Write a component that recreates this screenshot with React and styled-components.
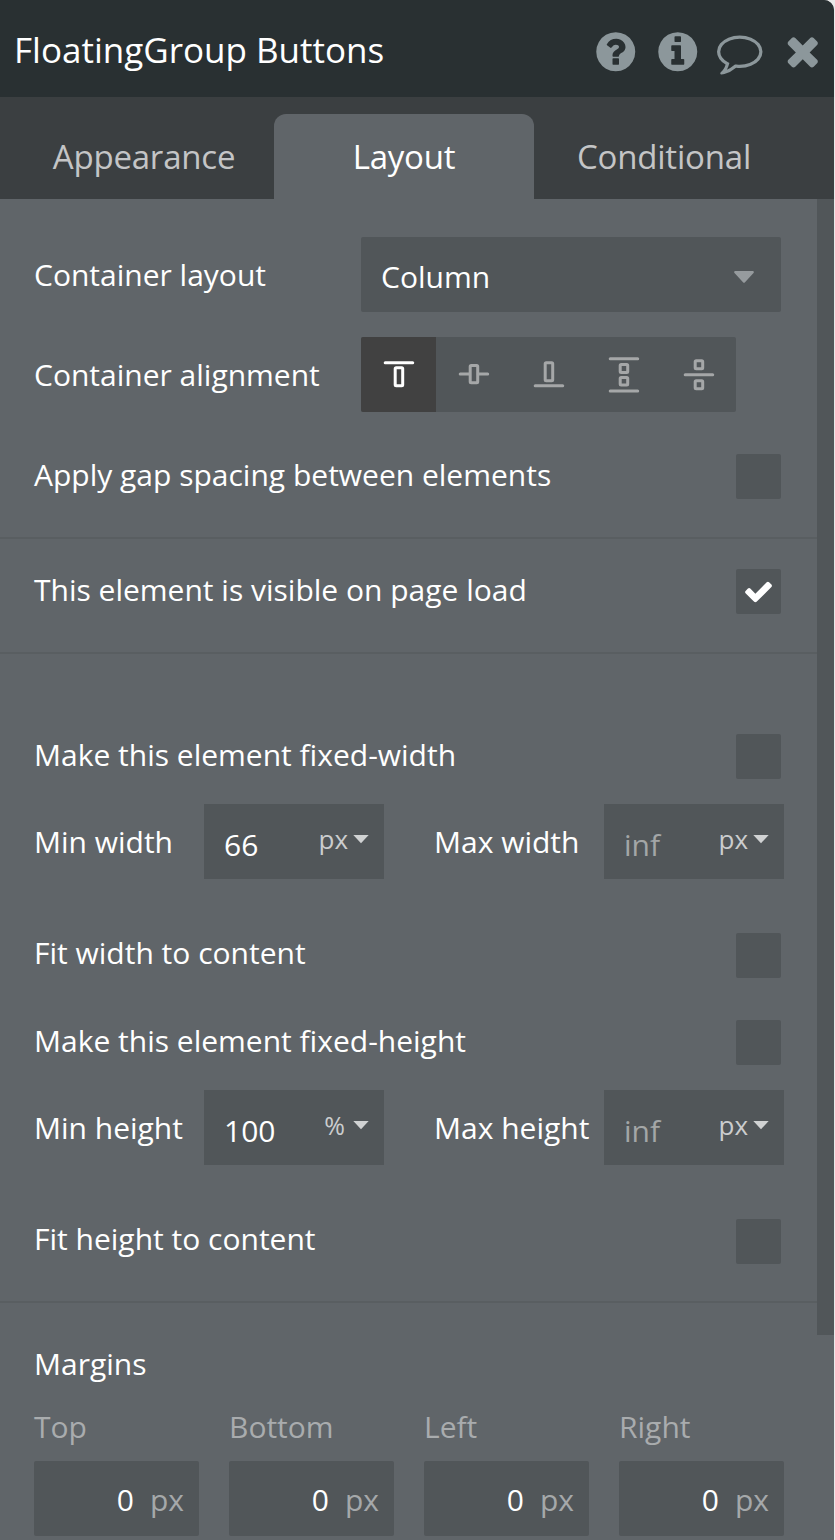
import React, { Fragment } from 'react'
import styled, { createGlobalStyle } from 'styled-components'

const GlobalStyle = createGlobalStyle`
  * {
    box-sizing: border-box;
  }

  body {
    margin: 0;
    background: #e9e9e9;
    font-family: 'Open Sans', sans-serif;
    font-size: 30px;
    color: #fff;
    overflow: hidden;
  }
`;

const Panel = styled.div`
  width: 834px;
  height: 1540px;
  display: flex;
  flex-direction: column;
  background: #606569;
  border-top-right-radius: 10px;
  overflow: hidden;
`;

const Header = styled.header`
  height: 97px;
  flex: none;
  display: flex;
  align-items: center;
  justify-content: space-between;
  padding: 0 9px 0 14px;
  background: #293032;
`;

const Title = styled.h1`
  margin: 0;
  padding-top: 3px;
  font-size: 35px;
  font-weight: 400;
  line-height: 46px;
`;

const Actions = styled.div`
  display: flex;
  gap: 16.8px;
  padding-top: 7px;
`;

const Glyph = styled.svg`
  display: block;
  width: ${({ $size }) => $size || 45.5}px;
  height: ${({ $size }) => $size || 45.5}px;
  margin-top: ${({ $shift }) => $shift || 0}px;
  fill: ${({ $color }) => $color || '#8c979b'};
`;

const Tabs = styled.nav`
  height: 102px;
  flex: none;
  display: flex;
  align-items: flex-end;
  padding-left: 14px;
  background: #3b3f41;
`;

const Tab = styled.div`
  width: 260px;
  height: 85px;
  line-height: 85px;
  text-align: center;
  font-size: 33px;
  letter-spacing: -0.2px;
  border-radius: 12px 12px 0 0;
  color: ${({ $active }) => $active ? '#fff' : '#c4c5c6'};
  background: ${({ $active }) => $active ? '#606569' : 'transparent'};
`;

const Content = styled.div`
  flex: 1;
  display: flex;
  align-items: flex-start;
`;

const Sections = styled.div`
  width: 817px;
`;

const ScrollThumb = styled.div`
  width: 17px;
  height: 1136px;
  background: #515659;
`;

const Section = styled.section`
  height: ${({ $height }) => $height}px;
  padding: ${({ $top }) => $top}px 33px 0 34px;
  border-bottom: 2px solid #595e61;
`;

const Row = styled.div`
  display: flex;
  align-items: center;
  height: ${({ $height }) => $height || 75}px;
  margin-bottom: ${({ $gap }) => $gap || 0}px;
`;

const CheckRow = styled(Row)`
  height: 45px;
  padding-right: 3px;
  justify-content: space-between;
`;

const Label = styled.label`
  width: ${({ $width }) => $width ? `${$width}px` : 'auto'};
  flex: none;
  padding-bottom: ${({ $lift }) => $lift || 0}px;
  line-height: 41px;
  white-space: nowrap;
`;

const Select = styled.div`
  width: 420px;
  height: 75px;
  display: flex;
  align-items: center;
  justify-content: space-between;
  padding: 4px 27px 0 20px;
  border-radius: 2px;
  background: #515659;
`;

const Caret = styled.svg`
  display: block;
  width: ${({ $width }) => $width}px;
  height: ${({ $height }) => $height}px;
  fill: ${({ $color }) => $color};
`;

const Alignments = styled.div`
  display: flex;
  border-radius: 2px;
  overflow: hidden;
  background: #515659;
`;

const Alignment = styled.div`
  width: 75px;
  height: 75px;
  color: ${({ $active }) => $active ? '#fff' : '#a5a7a8'};
  background: ${({ $active }) => $active ? '#414141' : 'transparent'};

  svg {
    display: block;
    fill: none;
    stroke: currentColor;
    stroke-width: 3;
    stroke-linecap: round;
    stroke-linejoin: round;
  }
`;

const Box = styled.div`
  width: 45px;
  height: 45px;
  display: flex;
  align-items: center;
  justify-content: center;
  border-radius: 2px;
  background: #515659;
`;

const SizeField = styled.div`
  width: 180px;
  height: 75px;
  display: flex;
  align-items: center;
  justify-content: space-between;
  margin-right: ${({ $last }) => $last ? 0 : 50}px;
  padding: 0 15px 0 20px;
  background: #515659;
`;

const Value = styled.span`
  padding-top: 6px;
  line-height: 41px;
  color: ${({ $muted }) => $muted ? '#a3a6a7' : '#fff'};
`;

const Unit = styled.span`
  display: flex;
  align-items: center;
  gap: ${({ $small }) => $small ? 8 : 5}px;
  padding-bottom: 5px;
  font-size: ${({ $small }) => $small ? 25 : 26}px;
  line-height: 36px;
  color: #cbcdce;
`;

const Margins = styled.section`
  padding: 40px 33px 0 34px;
`;

const MarginGrid = styled.div`
  display: grid;
  grid-template-columns: repeat(4, 165px);
  column-gap: 30px;
  margin-top: 22px;
`;

const MarginName = styled.div`
  height: 55px;
  line-height: 41px;
  color: #a9acae;
`;

const MarginField = styled.div`
  height: 75px;
  display: flex;
  align-items: center;
  justify-content: flex-end;
  gap: 16px;
  padding: 1px 15px 0 0;
  border-radius: 2px;
  background: #515659;

  span {
    color: #a5a8aa;
  }
`;

const disc = 'm640 416q0 209-103 385.500t-279.500 279.500-385.500 103-385.500-103-279.500-279.500-103-385.500 103-385.500 279.500-279.500 385.500-103 385.500 103 279.500 279.500 103 385.500z'

const glyphs = {
  help: 'M1024 1376v-192q0-14-9-23t-23-9h-192q-14 0-23 9t-9 23v192q0 14 9 23t23 9h192q14 0 23-9t9-23zm256-672q0-88-55.500-163t-138.500-116-170-41q-243 0-371 213-15 24 8 42l132 100q7 6 19 6 16 0 25-12 53-68 86-92 34-24 86-24 48 0 85.500 26t37.500 59q0 38-20 61t-68 45q-63 28-115.500 86.500t-52.500 125.500v36q0 14 9 23t23 9h192q14 0 23-9t9-23q0-19 21.500-49.500t54.500-49.500q32-18 49-28.500t46-35 44.500-48 28-60.500 12.500-81zm384 192q0 209-103 385.500t-279.500 279.500-385.500 103-385.500-103-279.500-279.500-103-385.500 103-385.500 279.500-279.500 385.500-103 385.500 103 279.500 279.500 103 385.500z',
  info: `M1152 1376v-160q0-14-9-23t-23-9h-96v-512q0-14-9-23t-23-9h-320q-14 0-23 9t-9 23v160q0 14 9 23t23 9h96v320h-96q-14 0-23 9t-9 23v160q0 14 9 23t23 9h448q14 0 23-9t9-23zm-128-896v-160q0-14-9-23t-23-9h-192q-14 0-23 9t-9 23v160q0 14 9 23t23 9h192q14 0 23-9t9-23z${disc}`,
  comment: 'M896 384q-204 0-381.500 69.500t-282 187.500-104.500 255q0 112 71.500 213.500t201.500 175.500l87 50-27 96q-24 91-70 172 152-63 275-171l43-38 57 6q69 8 130 8 204 0 381.500-69.500t282-187.500 104.500-255-104.500-255-282-187.500-381.500-69.500zm896 512q0 174-120 321.500t-326 233-450 85.500q-70 0-145-8-198 175-460 242-49 14-114 22h-5q-15 0-27-10.500t-16-27.500v-1q-3-4-.5-12t2-10 4.500-9.500l6-9 7-8.500 8-9q7-8 31-34.500t34.500-38 31-39.500 32.500-51 27-59 26-76q-157-89-247.500-220t-90.500-281q0-174 120-321.500t326-233 450-85.500 450 85.500 326 233 120 321.500z',
  close: 'M1490 1322q0 40-28 68l-136 136q-28 28-68 28t-68-28l-294-294-294 294q-28 28-68 28t-68-28l-136-136q-28-28-28-68t28-68l294-294-294-294q-28-28-28-68t28-68l136-136q28-28 68-28t68 28l294 294 294-294q28-28 68-28t68 28l136 136q28 28 28 68t-28 68l-294 294 294 294q28 28 28 68z',
  check: 'M1671 566q0 40-28 68l-724 724-136 136q-28 28-68 28t-68-28l-136-136-362-362q-28-28-28-68t28-68l136-136q28-28 68-28t68 28l294 295 656-657q28-28 68-28t68 28l136 136q28 28 28 68z'
}

const Icon = ({ name, size, shift, color }) => (
  <Glyph viewBox="0 0 1792 1792" $size={size} $shift={shift} $color={color}>
    <path d={glyphs[name]} />
  </Glyph>
)

const alignments = [
  <Fragment>
    <path d="M24 25.500H51.500" />
    <rect x="34" y="30.500" width="7.500" height="18" rx="1" />
  </Fragment>,
  <Fragment>
    <path d="M24 36.800H33M42 36.800H51.500" />
    <rect x="34" y="28.200" width="7.500" height="17.300" rx="1" />
  </Fragment>,
  <Fragment>
    <rect x="34" y="25.500" width="7.500" height="18" rx="1" />
    <path d="M24 48.500H51.500" />
  </Fragment>,
  <Fragment>
    <path d="M24 21.500H51.500M24 53.700H51.500" />
    <rect x="34" y="27.200" width="7.500" height="8" rx="1" />
    <rect x="34" y="40.200" width="7.500" height="7.700" rx="1" />
  </Fragment>,
  <Fragment>
    <path d="M24 37.500H51.500" />
    <rect x="34" y="23.500" width="7.500" height="8" rx="1" />
    <rect x="34" y="43.500" width="7.500" height="8" rx="1" />
  </Fragment>
]

const Check = ({ label, checked, gap, lift }) => (
  <CheckRow $gap={gap}>
    <Label $lift={lift || 4}>{label}</Label>
    <Box>
      {checked && <Icon name="check" size={31} color="#fff" />}
    </Box>
  </CheckRow>
)

const Size = ({ value, unit, last }) => (
  <SizeField $last={last}>
    <Value $muted={value === 'inf'}>{value}</Value>
    <Unit $small={unit === '%'}>
      {unit}
      <Caret viewBox="0 0 16 10" $width={16} $height={10} $color="#d0d2d3">
        <path d="M0.300 1H15.700L8 9.300Z" />
      </Caret>
    </Unit>
  </SizeField>
)

const App = () => {
  return (
    <Fragment>
      <GlobalStyle />
      <Panel>
        <Header>
          <Title>FloatingGroup Buttons</Title>
          <Actions>
            <Icon name="help" />
            <Icon name="info" />
            <Icon name="comment" />
            <Icon name="close" shift={-0.8} />
          </Actions>
        </Header>
        <Tabs>
          <Tab>Appearance</Tab>
          <Tab $active>Layout</Tab>
          <Tab>Conditional</Tab>
        </Tabs>
        <Content>
          <Sections>
            <Section $height={340} $top={38}>
              <Row $gap={25}>
                <Label $width={327}>Container layout</Label>
                <Select>
                  Column
                  <Caret viewBox="0 0 20 12" $width={20} $height={12} $color="#969b9e">
                    <path d="M1 0H19Q20.500 0.600 19.500 2L11 11.300Q10 12.400 9 11.300L0.500 2Q-0.500 0.600 1 0Z" />
                  </Caret>
                </Select>
              </Row>
              <Row $gap={42}>
                <Label $width={327}>Container alignment</Label>
                <Alignments>
                  {alignments.map((shape, i) => (
                    <Alignment key={i} $active={i === 0}>
                      <svg width="75" height="75" viewBox="-0.200 -0.200 75 75">{shape}</svg>
                    </Alignment>
                  ))}
                </Alignments>
              </Row>
              <Check label="Apply gap spacing between elements" />
            </Section>
            <Section $height={115} $top={30}>
              <Check label="This element is visible on page load" checked />
            </Section>
            <Section $height={649} $top={80}>
              <Check label="Make this element fixed-width" gap={25} />
              <Row $gap={54}>
                <Label $width={170}>Min width</Label>
                <Size value="66" unit="px" />
                <Label $width={170}>Max width</Label>
                <Size value="inf" unit="px" last />
              </Row>
              <Check label="Fit width to content" gap={42} lift={6} />
              <Check label="Make this element fixed-height" gap={25} />
              <Row $gap={54}>
                <Label $width={170}>Min height</Label>
                <Size value="100" unit="%" />
                <Label $width={170}>Max height</Label>
                <Size value="inf" unit="px" last />
              </Row>
              <Check label="Fit height to content" lift={6} />
            </Section>
            <Margins>
              <Label>Margins</Label>
              <MarginGrid>
                {['Top', 'Bottom', 'Left', 'Right'].map(side => (
                  <div key={side}>
                    <MarginName>{side}</MarginName>
                    <MarginField>0 <span>px</span></MarginField>
                  </div>
                ))}
              </MarginGrid>
            </Margins>
          </Sections>
          <ScrollThumb />
        </Content>
      </Panel>
    </Fragment>
  )
}

export default App
